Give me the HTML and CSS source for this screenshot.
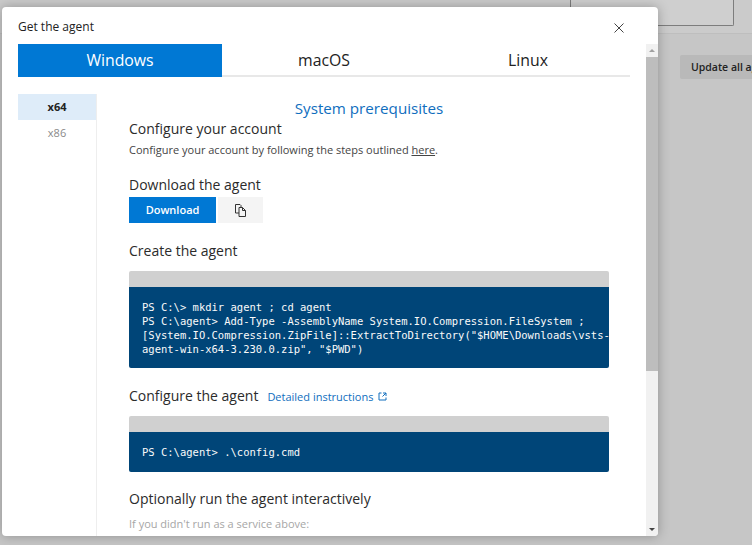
FILE: index.html
```html
<!DOCTYPE html>
<html lang="en">
<head>
<meta charset="utf-8">
<title>Get the agent</title>
<link rel="stylesheet" href="styles.css">
</head>
<body>
<div class="page">
  <div class="topbar"><div class="search-box"></div></div>
  <div class="actions"><button class="update-btn">Update all agents</button></div>
  <div class="modal">
    <div class="modal-head">
      <h1 class="modal-title">Get the agent</h1>
      <svg class="close" width="12" height="12" viewBox="0 0 12 12"><path d="M1.5 1.5l9 9M10.5 1.5l-9 9" stroke="#444" stroke-width="1" fill="none"/></svg>
    </div>
    <div class="modal-wrap">
      <div class="modal-main">
        <div class="tabs">
          <div class="tab tab-active">Windows</div>
          <div class="tab">macOS</div>
          <div class="tab">Linux</div>
        </div>
        <div class="body">
          <div class="side">
            <div class="arch arch-active">x64</div>
            <div class="arch">x86</div>
          </div>
          <div class="content">
            <div class="prereq">System prerequisites</div>
            <h2 class="h h-first">Configure your account</h2>
            <p class="txt">Configure your account by following the steps outlined <a class="here">here</a>.</p>
            <h2 class="h h-dl">Download the agent</h2>
            <div class="btns">
              <div class="btn-primary">Download</div>
              <div class="btn-copy">
                <svg width="12" height="13" viewBox="0 0 12 13"><path d="M.5.500h4.500l1 1v1.500M.5.500v8.500h3.500M4 3.500h3.500l3 3v6h-6.500zM7.500 3.500v3h3" stroke="#333" stroke-width="1" fill="none"/></svg>
              </div>
            </div>
            <h2 class="h h-create">Create the agent</h2>
            <div class="code">
              <div class="code-head"></div>
              <pre class="code-body code-tall">PS C:\&gt; mkdir agent ; cd agent
PS C:\agent&gt; Add-Type -AssemblyName System.IO.Compression.FileSystem ;
[System.IO.Compression.ZipFile]::ExtractToDirectory("$HOME\Downloads\vsts-
agent-win-x64-3.230.0.zip", "$PWD")</pre>
            </div>
            <div class="h-row">
              <h2 class="h">Configure the agent</h2>
              <a class="detail">Detailed instructions</a>
              <svg class="ext" width="9" height="9" viewBox="0 0 9 9"><path d="M3.500 1h-2.500v7h7v-2.500M5 1h3v3M8 1l-3.500 3.500" stroke="#106ebe" stroke-width="1" fill="none"/></svg>
            </div>
            <div class="code">
              <div class="code-head"></div>
              <pre class="code-body code-short">PS C:\agent&gt; .\config.cmd</pre>
            </div>
            <h2 class="h h-opt">Optionally run the agent interactively</h2>
            <p class="txt txt-muted">If you didn't run as a service above:</p>
          </div>
        </div>
      </div>
      <div class="scroll">
        <div class="scroll-btn"><span class="arrow-up"></span></div>
        <div class="scroll-track"><div class="scroll-thumb"></div></div>
        <div class="scroll-btn scroll-btn-down"><span class="arrow-down"></span></div>
      </div>
    </div>
  </div>
</div>
</body>
</html>
```
FILE: styles.css
```css
* { box-sizing: border-box; }
html, body { margin: 0; padding: 0; }
body { width: 752px; height: 545px; overflow: hidden; background: #c6c6c6; font-family: "Open Sans", "Noto Sans", sans-serif; }
.page { position: relative; width: 752px; height: 545px; overflow: hidden; }
.topbar { height: 34px; background: #cbcbcb; border-bottom: 1px solid #bebebe; padding-left: 570px; }
.search-box { width: 164px; height: 26px; border: 1px solid #7d7d7d; border-top: 0; border-radius: 0 0 2px 2px; background: #cfcfcf; }
.actions { padding: 21px 0 0 680px; }
.update-btn { display: block; width: 110px; height: 24px; border: 0; border-radius: 2px; background: #b9b9b9; color: #222; font: 600 10.500px "Open Sans", sans-serif; text-align: left; padding: 0 0 0 11px; white-space: nowrap; }
.modal { position: absolute; left: 2px; top: 7px; width: 656px; height: 529px; background: #fff; border-radius: 4px; box-shadow: 0 0 12px rgba(0,0,0,.28); overflow: hidden; display: flex; flex-direction: column; }
.modal-head { height: 37px; flex: none; display: flex; justify-content: space-between; align-items: center; padding: 2px 33px 0 16px; }
.modal-title { margin: 0; font-size: 12px; font-weight: 500; color: #222; }
.close { display: block; margin-top: 2px; }
.modal-wrap { flex: 1; display: flex; min-height: 0; }
.modal-main { width: 644px; padding-left: 16px; overflow: hidden; }
.tabs { width: 612px; height: 33px; display: flex; border-bottom: 2px solid #e8e8e8; }
.tab { flex: 1; height: 33px; text-align: center; font-size: 15.800px; line-height: 33px; color: #222; }
.tab-active { background: #0078d4; color: #fff; }
.body { display: flex; padding-top: 17px; }
.side { width: 79px; flex: none; height: 460px; border-right: 1px solid #eeeeee; }
.arch { height: 26px; line-height: 25px; text-align: center; font-size: 11px; color: #8a8a8a; }
.arch-active { background: #deecf9; color: #222; font-weight: 700; }
.content { width: 480px; margin-left: 32px; flex: none; }
.prereq { text-align: center; font-size: 15.200px; line-height: 20px; margin-top: 4px; color: #106ebe; }
.h { margin: 0; font-size: 14px; font-weight: 400; line-height: 20px; color: #2b2b2b; white-space: nowrap; }
.h-first { margin-top: 1px; }
.txt { margin: 2px 0 0; font-size: 11px; line-height: 18px; color: #444; white-space: nowrap; }
.here { text-decoration: underline; }
.txt-muted { color: #a6a6a6; margin-top: 6px; }
.h-dl { margin-top: 16px; }
.btns { display: flex; gap: 2px; margin-top: 2px; }
.btn-primary { width: 87px; height: 26px; background: #0078d4; color: #fff; font-size: 11px; font-weight: 600; line-height: 26px; text-align: center; }
.btn-copy { width: 45px; height: 26px; background: #f4f4f4; display: flex; align-items: center; justify-content: center; }
.h-create { margin-top: 18px; }
.code { margin-top: 10px; border-radius: 2px; overflow: hidden; }
.code-head { height: 16px; background: #d0d0d0; }
.code-body { margin: 0; background: #004578; color: #fafafa; font-family: "DejaVu Sans Mono", "Liberation Mono", monospace; font-size: 10.500px; line-height: 14px; letter-spacing: 0; white-space: pre; overflow: hidden; padding: 0 13px; }
.code-tall { height: 81px; padding-top: 13px; }
.code-short { height: 40px; padding-top: 13px; }
.h-row { display: flex; align-items: center; margin-top: 18px; }
.detail { margin-left: 9px; font-size: 11px; color: #106ebe; }
.ext { margin-left: 5px; }
.h-opt { margin-top: 17px; }
.scroll { width: 12px; flex: none; background: #f1f1f1; display: flex; flex-direction: column; }
.scroll-btn { height: 13px; flex: none; display: flex; align-items: center; justify-content: center; }
.scroll-track { flex: 1; }
.scroll-thumb { height: 314px; background: #bdbdbd; }
.arrow-up { width: 0; height: 0; border: 3px solid transparent; border-top: 0; border-bottom: 3px solid #a0a0a0; }
.arrow-down { width: 0; height: 0; border: 3px solid transparent; border-bottom: 0; border-top: 3px solid #444; }
```
